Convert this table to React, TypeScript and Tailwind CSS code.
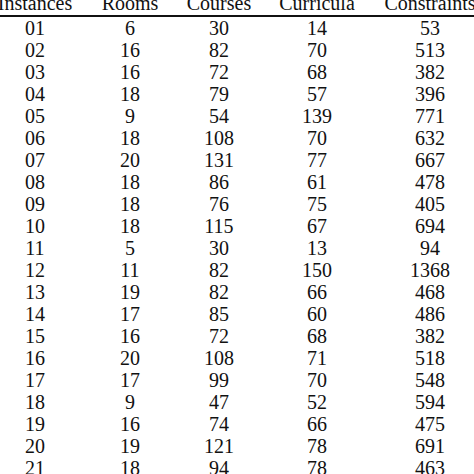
import React from 'react';

const headers = ['Instances', 'Rooms', 'Courses', 'Curricula', 'Constraints'];

const rows: string[][] = [
  ['01', '6', '30', '14', '53'],
  ['02', '16', '82', '70', '513'],
  ['03', '16', '72', '68', '382'],
  ['04', '18', '79', '57', '396'],
  ['05', '9', '54', '139', '771'],
  ['06', '18', '108', '70', '632'],
  ['07', '20', '131', '77', '667'],
  ['08', '18', '86', '61', '478'],
  ['09', '18', '76', '75', '405'],
  ['10', '18', '115', '67', '694'],
  ['11', '5', '30', '13', '94'],
  ['12', '11', '82', '150', '1368'],
  ['13', '19', '82', '66', '468'],
  ['14', '17', '85', '60', '486'],
  ['15', '16', '72', '68', '382'],
  ['16', '20', '108', '71', '518'],
  ['17', '17', '99', '70', '548'],
  ['18', '9', '47', '52', '594'],
  ['19', '16', '74', '66', '475'],
  ['20', '19', '121', '78', '691'],
  ['21', '18', '94', '78', '463'],
];

// column widths picked so the centres land where the scan has them
const gridCols = 'grid grid-cols-[70px_120px_58px_138px_88px]';

const Cell: React.FC<{ text: string }> = ({ text }) => (
  <div className="flex justify-center whitespace-nowrap">{text}</div>
);

const App: React.FC = () => {
  return (
    <div className="w-[474px] h-[474px] overflow-hidden bg-white text-[#111]">
      <div className="-mt-[8px] text-[20px] leading-[22px] font-['Liberation_Serif','Times_New_Roman',serif]">
        <div className={gridCols}>
          {headers.map((h) => (
            <Cell key={h} text={h} />
          ))}
        </div>
        <div className="mt-[1px] h-[1.5px] bg-[#111]" />
        {rows.map((r) => (
          <div key={r[0]} className={gridCols}>
            {r.map((v, i) => (
              <Cell key={i} text={v} />
            ))}
          </div>
        ))}
      </div>
    </div>
  );
};

export default App;
